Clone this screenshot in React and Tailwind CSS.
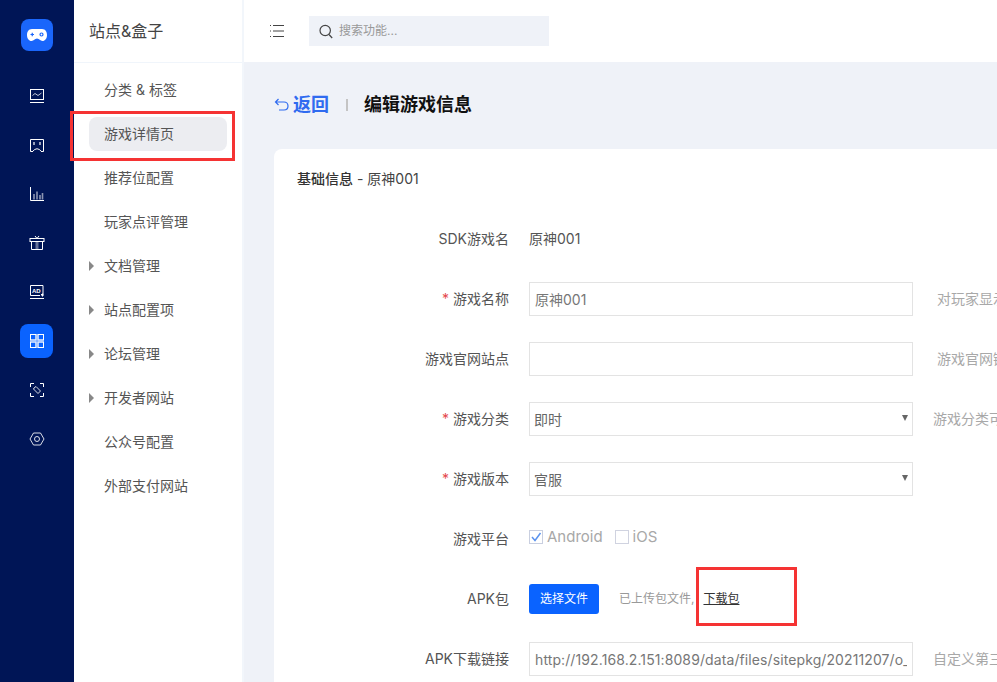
import React from 'react'

const cjk = "font-['Inter','Noto_Sans_CJK_SC',sans-serif]"

const IconTrend = () => (
  <svg width="16" height="16" viewBox="0 0 16 16" fill="none" stroke="white" strokeWidth="1">
    <rect x="1.5" y="1.5" width="13" height="10" />
    <path d="M3.5 7.5 L6 5.5 L9 7.5 L12.5 5" strokeOpacity="0.75" />
    <path d="M1 14.5 H15" />
  </svg>
)

const IconFace = () => (
  <svg width="16" height="16" viewBox="0 0 16 16" fill="none" stroke="white" strokeWidth="1">
    <path d="M4 14.5 H1.5 V2.5 H14.5 V14.5 H12" />
    <path d="M3.5 14.5 Q8 9 12.5 14.5" />
    <rect x="4" y="5" width="2" height="3" fill="white" fillOpacity="0.6" stroke="none" />
    <rect x="10" y="5" width="2" height="3" fill="white" fillOpacity="0.6" stroke="none" />
  </svg>
)

const IconBars = () => (
  <svg width="16" height="16" viewBox="0 0 16 16" fill="none" stroke="white" strokeWidth="1">
    <path d="M1.5 1 V14.5 H15" />
    <path d="M5 13.5 V8 M8 13.5 V5.5 M11 13.5 V9 M13.5 13.5 V7" strokeOpacity="0.55" strokeWidth="1.6" />
  </svg>
)

const IconGift = () => (
  <svg width="16" height="16" viewBox="0 0 16 16" fill="none" stroke="white" strokeWidth="1">
    <rect x="1" y="3.5" width="14" height="3" />
    <path d="M2.5 6.5 V14.5 H13.5 V6.5" />
    <rect x="6.5" y="6.5" width="3" height="8" fill="white" fillOpacity="0.4" stroke="none" />
    <path d="M8 3.5 L6 1 M8 3.5 L10 1" />
  </svg>
)

const IconAd = () => (
  <svg width="16" height="16" viewBox="0 0 16 16" fill="none" stroke="white" strokeWidth="1">
    <path d="M12 10.5 H14 V1.5 H1.5 V11.5 H11" />
    <text x="3" y="8.6" fontSize="6" fontWeight="700" fill="white" stroke="none" fontFamily="Liberation Sans, sans-serif">AD</text>
    <path d="M13.5 9.5 V12.5 M12 11 H15" />
    <path d="M1 14.5 H15" />
  </svg>
)

const IconGrid = () => (
  <svg width="16" height="16" viewBox="0 0 16 16" fill="none" stroke="white" strokeWidth="1">
    <path d="M6 1 H10 V6 H15 V10 H10 V15 H6 V10 H1 V6 H6 Z" fill="white" fillOpacity="0.35" stroke="none" />
    <rect x="1.5" y="1.5" width="5.5" height="5.5" />
    <rect x="9" y="1.5" width="5.5" height="5.5" />
    <rect x="1.5" y="9" width="5.5" height="5.5" />
    <rect x="9" y="9" width="5.5" height="5.5" />
  </svg>
)

const IconScanTag = () => (
  <svg width="16" height="16" viewBox="0 0 16 16" fill="none" stroke="white" strokeWidth="1">
    <path d="M1.5 5 V1.5 H5 M11 1.5 H14.5 V5 M14.5 11 V14.5 H11 M5 14.5 H1.5 V11" />
    <path d="M5 6 L7 4.5 L11.5 9 L9 11.5 L4.5 7 Z" strokeOpacity="0.85" />
  </svg>
)

const IconHex = () => (
  <svg width="16" height="16" viewBox="0 0 16 16" fill="none" stroke="white" strokeWidth="1" strokeOpacity="0.85">
    <path d="M4.5 2 H11.5 L15 8 L11.5 14 H4.5 L1 8 Z" />
    <circle cx="8" cy="8" r="2.5" />
  </svg>
)

const railIcons = [
  { id: 1, Icon: IconTrend },
  { id: 2, Icon: IconFace },
  { id: 3, Icon: IconBars },
  { id: 4, Icon: IconGift },
  { id: 5, Icon: IconAd },
  { id: 6, Icon: IconGrid, active: true },
  { id: 7, Icon: IconScanTag },
  { id: 8, Icon: IconHex },
]

const MENU = [
  { name: '分类 & 标签' },
  { name: '游戏详情页', active: true },
  { name: '推荐位配置' },
  { name: '玩家点评管理' },
  { name: '文档管理', arrow: true },
  { name: '站点配置项', arrow: true },
  { name: '论坛管理', arrow: true },
  { name: '开发者网站', arrow: true },
  { name: '公众号配置' },
  { name: '外部支付网站' },
]

const Row = ({ label, required, hint, hintGap = 'ml-6', children }) => (
  <div className="flex items-center h-[34px] mb-[26px]">
    <label className="w-[235px] shrink-0 text-right text-sm text-[#555]">
      {required && <span className="text-[#e5484d] mr-1">*</span>}
      {label}
    </label>
    <div className="ml-5 w-[384px] shrink-0 h-full flex items-center relative">{children}</div>
    {hint && <span className={`${hintGap} shrink-0 text-sm text-[#a8a8a8] whitespace-nowrap`}>{hint}</span>}
  </div>
)

const TextBox = ({ value, className = '' }) => (
  <input
    readOnly
    value={value}
    className={`w-full h-full border border-[#e3e3e3] px-[5px] text-sm text-[#777] outline-none bg-white ${className}`}
  />
)

const SelectBox = ({ value }) => (
  <>
    <select
      defaultValue={value}
      className="w-full h-full border border-[#e3e3e3] px-[4px] pt-[2px] text-sm text-[#666] outline-none bg-white appearance-none"
    >
      <option>{value}</option>
    </select>
    <span className="absolute right-[5px] top-[13px] w-0 h-0 border-x-[3px] border-x-transparent border-t-[6px] border-t-[#666]" />
  </>
)

export default function App() {
  return (
    <div className={`relative w-[997px] h-[682px] overflow-hidden flex bg-[#eff2f8] ${cjk}`}>
      {/* icon rail */}
      <div className="w-[74px] shrink-0 bg-[#001556] flex flex-col items-center">
        <div className="mt-[19px] w-8 h-8 rounded-lg bg-[#1a66fb] flex items-center justify-center">
          <svg width="22" height="14" viewBox="0 0 22 14">
            <path d="M6 1 H16 C19.5 1 21 4 21 7 C21 10.5 19 13 16.5 13 C14 13 13.5 10.5 11 10.5 C8.5 10.5 8 13 5.5 13 C3 13 1 10.5 1 7 C1 4 2.5 1 6 1 Z" fill="white" />
            <path d="M4.5 6.5 H8 M6.25 4.8 V8.2" stroke="#1a66fb" strokeWidth="1.2" />
            <circle cx="15.5" cy="6.5" r="1.5" fill="none" stroke="#1a66fb" strokeWidth="1.2" />
          </svg>
        </div>
        <div className="mt-5 flex flex-col items-center">
          {railIcons.map(({ id, Icon, active }) => (
            <div key={id} className="h-[49px] w-[74px] flex items-center justify-center">
              <div className={`w-[33px] h-[34px] mr-px pl-px rounded-lg flex items-center justify-center ${active ? 'bg-[#0a63ff]' : ''}`}>
                <Icon />
              </div>
            </div>
          ))}
        </div>
      </div>

      {/* sub menu */}
      <div className="w-[170px] shrink-0 bg-white border-r-2 border-[#f2f6fb]">
        <div className="h-[63px] border-b border-[#f0f5fb] pl-[15px] flex items-center text-base text-[#444]">
          站点&盒子
        </div>
        <div className="pt-[10px] pl-[15px] pr-[15px]">
          {MENU.map((item) => (
            <div
              key={item.name}
              className={`relative h-[34px] mb-[10px] pl-[15px] flex items-center text-sm text-[#555] rounded-lg ${item.active ? 'bg-[#ecedf1]' : ''}`}
            >
              {item.arrow && (
                <span className="absolute left-0 top-[12px] w-0 h-0 border-y-[5px] border-y-transparent border-l-[5px] border-l-[#888]" />
              )}
              {item.name}
            </div>
          ))}
        </div>
      </div>

      {/* right side */}
      <div className="flex-1 min-w-0 flex flex-col">
        <div className="h-[62px] shrink-0 bg-white flex items-center pl-[25px]">
          <svg width="16" height="14" viewBox="0 0 16 14" fill="none" stroke="#444" strokeWidth="1">
            <path d="M1 1.5 H2 M4 1.5 H15 M1 7 H2 M4 7 H15 M1 12.5 H2 M4 12.5 H15" />
          </svg>
          <div className="ml-6 w-[240px] h-[30px] bg-[#eff2f8] flex items-center pl-[10px]">
            <svg width="14" height="15" viewBox="0 0 14 15" fill="none" stroke="#444" strokeWidth="1.2">
              <circle cx="6.2" cy="6.5" r="5.2" />
              <path d="M10 10.5 L13.2 14" />
            </svg>
            <span className="ml-[6px] text-xs text-[#999]">搜索功能...</span>
          </div>
        </div>

        <div className="flex-1 pl-[30px]">
          <div className="h-[86px] mb-px flex items-center">
            <svg width="15" height="14" viewBox="0 0 15 14" fill="none" stroke="#2f6bf0" strokeWidth="1.2">
              <path d="M4.5 1 L1.5 4 L4.5 7 M1.5 4 H10 C12.5 4 14 6 14 8 C14 10.5 12.5 12 10 12 H5" />
            </svg>
            <span className="ml-1 text-lg leading-none font-bold text-[#2f6bf0]">返回</span>
            <span className="ml-[17px] w-[2px] h-3 bg-[#c4c4c4]" />
            <span className="ml-4 text-lg leading-none font-bold text-[#111]">编辑游戏信息</span>
          </div>

          <div className="bg-white rounded-tl-lg h-[600px] w-[760px]">
            <div className="pl-[23px] pt-[20px] h-[73px] text-sm text-[#444]">
              <span className="font-medium text-[#333]">基础信息</span> - 原神001
            </div>

            <Row label="SDK游戏名">
              <span className="text-sm text-[#555]">原神001</span>
            </Row>
            <Row label="游戏名称" required hint="对玩家显示的名称">
              <TextBox value="原神001" />
            </Row>
            <Row label="游戏官网站点" hint="游戏官网链接地址">
              <TextBox value="" />
            </Row>
            <Row label="游戏分类" required hint="游戏分类可选择" hintGap="ml-5">
              <SelectBox value="即时" />
            </Row>
            <Row label="游戏版本" required>
              <SelectBox value="官服" />
            </Row>
            <Row label="游戏平台">
              <div className="flex items-center -mt-1 text-[15px] text-[#a8a8a8]">
                <span className="w-[14px] h-[14px] border border-[#c9cfe0] flex items-center justify-center">
                  <svg width="12" height="12" viewBox="0 0 12 12" fill="none" stroke="#5b93ee" strokeWidth="1.5">
                    <path d="M2 6 L5 9.5 L10.5 2" />
                  </svg>
                </span>
                <span className="ml-1">Android</span>
                <span className="ml-3 w-[14px] h-[14px] border border-[#d0d3e0]" />
                <span className="ml-1">iOS</span>
              </div>
            </Row>
            <Row label="APK包">
              <button className="w-[70px] h-[30px] rounded-[3px] bg-[#0a63ff] text-white text-xs">选择文件</button>
              <span className="ml-5 text-xs text-[#999]">已上传包文件,</span>
              <a className="ml-[9px] text-xs text-[#333] underline">下载包</a>
            </Row>
            <Row label="APK下载链接" hint="自定义第三方下载链接" hintGap="ml-5">
              <TextBox value="http://192.168.2.151:8089/data/files/sitepkg/20211207/o_1fmdkq" className="tracking-[0.1px]" />
            </Row>
          </div>
        </div>
      </div>

      {/* red annotation boxes on the screenshot */}
      <div className="absolute left-[70px] top-[111px] w-[165px] h-[50px] border-[3px] border-[#f53333]" />
      <div className="absolute left-[696px] top-[567px] w-[101px] h-[59px] border-[3px] border-[#f53333]" />
    </div>
  )
}
